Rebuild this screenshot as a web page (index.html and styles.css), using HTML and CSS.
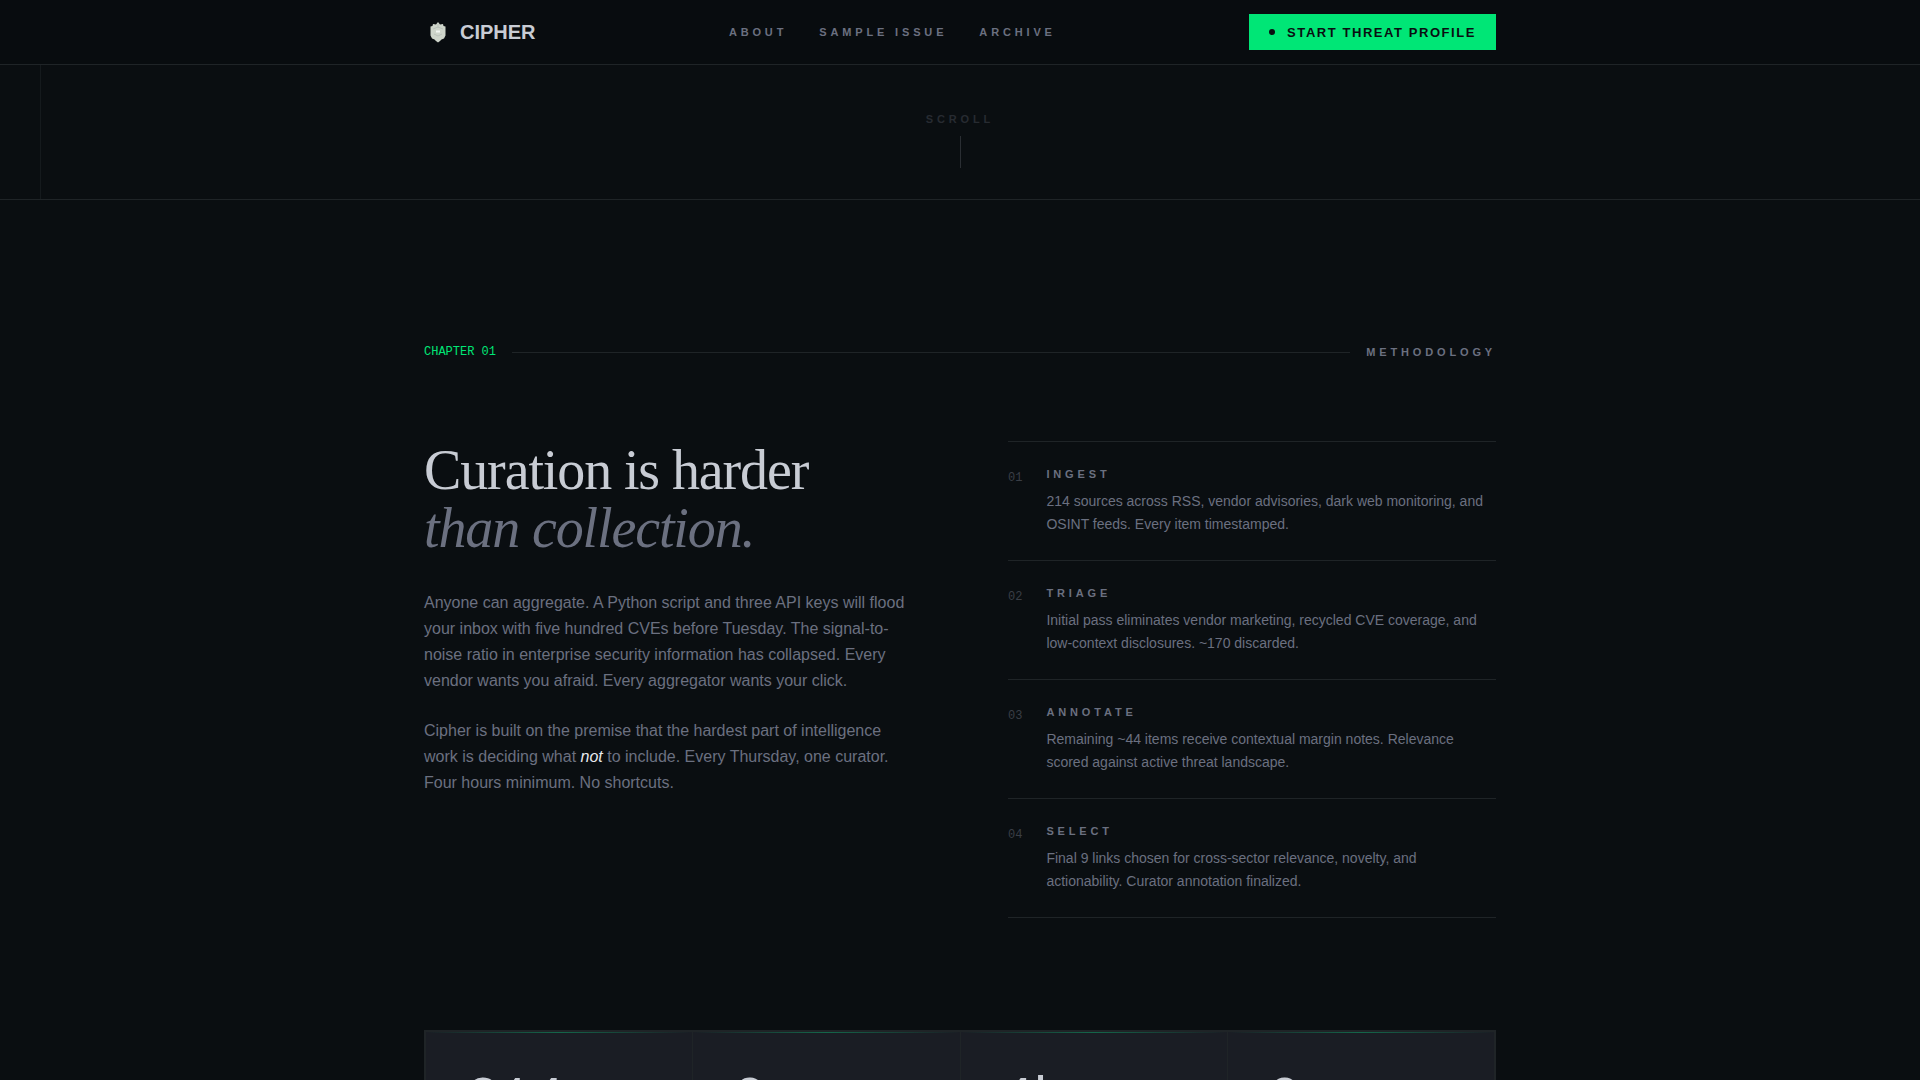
FILE: index.html
```
<!DOCTYPE html>
<html lang="en">
<head>
    <meta charset="UTF-8">
    <meta name="viewport" content="width=device-width, initial-scale=1.0">
    <title>Cipher</title>
    <link rel="stylesheet" href="styles.css">
</head>
<body>
    <header class="site-header">
        <div class="container header-inner">
            <a class="logo" href="#">
                <svg width="28" height="28" viewBox="0 0 28 28" aria-hidden="true">
                    <path d="M14 4l2 2.500 3-.5.500 2 2 .5v9l-1.500 3-2.500 1-1.500 1.500-2 1.500-2-1.500-1.500-1.500-2.500-1-1.500-3v-9l2-.5.500-2 3 .5z" fill="#ced5ca"/>
                    <path d="M9 11l5-2 5 2M10 16l4 2 4-2M14 6v4" fill="none" stroke="#bac2ba" stroke-width="1"/>
                    <path d="M12 13.500h4" stroke="#f2f6f2" stroke-width="2"/>
                </svg>
                <span>CIPHER</span>
            </a>
            <nav class="site-nav">
                <a href="#about">ABOUT</a>
                <a href="#sample">SAMPLE ISSUE</a>
                <a href="#archive">ARCHIVE</a>
            </nav>
            <button class="cta" type="button"><span class="cta-dot"></span>START THREAT PROFILE</button>
        </div>
    </header>

    <main>
        <section class="hero">
            <div class="scroll-hint">
                <span>SCROLL</span>
                <div class="scroll-line"></div>
            </div>
        </section>

        <section class="container methodology" id="about">
            <div class="chapter">
                <span class="chapter-number">CHAPTER 01</span>
                <div class="chapter-rule"></div>
                <span class="chapter-name">METHODOLOGY</span>
            </div>

            <div class="columns">
                <div class="intro">
                    <h2>Curation is harder<br><em>than collection.</em></h2>
                    <p>Anyone can aggregate. A Python script and three API keys will flood your inbox with five hundred CVEs before Tuesday. The signal-to-noise ratio in enterprise security information has collapsed. Every vendor wants you afraid. Every aggregator wants your click.</p>
                    <p>Cipher is built on the premise that the hardest part of intelligence work is deciding what <em>not</em> to include. Every Thursday, one curator. Four hours minimum. No shortcuts.</p>
                </div>

                <ol class="steps">
                    <li>
                        <span class="step-number">01</span>
                        <div>
                            <h3>INGEST</h3>
                            <p>214 sources across RSS, vendor advisories, dark web monitoring, and OSINT feeds. Every item timestamped.</p>
                        </div>
                    </li>
                    <li>
                        <span class="step-number">02</span>
                        <div>
                            <h3>TRIAGE</h3>
                            <p>Initial pass eliminates vendor marketing, recycled CVE coverage, and low-context disclosures. ~170 discarded.</p>
                        </div>
                    </li>
                    <li>
                        <span class="step-number">03</span>
                        <div>
                            <h3>ANNOTATE</h3>
                            <p>Remaining ~44 items receive contextual margin notes. Relevance scored against active threat landscape.</p>
                        </div>
                    </li>
                    <li>
                        <span class="step-number">04</span>
                        <div>
                            <h3>SELECT</h3>
                            <p>Final 9 links chosen for cross-sector relevance, novelty, and actionability. Curator annotation finalized.</p>
                        </div>
                    </li>
                </ol>
            </div>

            <div class="stats">
                <div class="stat">214</div>
                <div class="stat">9</div>
                <div class="stat">4h</div>
                <div class="stat">0</div>
            </div>
        </section>
    </main>
</body>
</html>
```
FILE: styles.css
```
* {
    box-sizing: border-box;
    margin: 0;
    padding: 0;
}
body {
    background: #0a0e11;
    color: #6b7080;
    font-family: "Liberation Sans", Arial, sans-serif;
    font-size: 16px;
    line-height: 26px;
    height: 100vh;
    overflow: hidden;
}
a {
    color: inherit;
    text-decoration: none;
}
.container {
    max-width: 1200px;
    margin: 0 auto;
    padding: 0 64px;
}

/* header */
.site-header {
    background: #080c0f;
    border-bottom: 1px solid #1f2427;
}
.header-inner {
    display: flex;
    align-items: center;
    justify-content: space-between;
    height: 64px;
}
.logo {
    display: flex;
    align-items: center;
    gap: 8px;
    color: #c8ccd4;
    font-size: 20px;
    font-weight: bold;
}
.site-nav {
    display: flex;
    gap: 32px;
    font-size: 11px;
    font-weight: bold;
    letter-spacing: 0.35em;
}
.cta {
    display: flex;
    align-items: center;
    gap: 12px;
    height: 36px;
    padding: 0 20px;
    border: none;
    background: #00e676;
    color: #0a0e11;
    font-family: inherit;
    font-size: 13px;
    font-weight: bold;
    letter-spacing: 0.12em;
    cursor: pointer;
}
.cta-dot {
    width: 6px;
    height: 6px;
    border-radius: 50%;
    background: #0a0e11;
}

/* hero */
.hero {
    position: relative;
    padding: 46px 0 31px;
    border-bottom: 1px solid #1f2427;
}
.hero::before {
    content: "";
    position: absolute;
    top: 0;
    bottom: 0;
    left: 40px;
    width: 1px;
    background: #151a1d;
}
.scroll-hint {
    display: flex;
    flex-direction: column;
    align-items: center;
    gap: 9px;
    color: #272b31;
    font-size: 11px;
    font-weight: bold;
    letter-spacing: 0.35em;
    line-height: 16px;
}
.scroll-line {
    width: 1px;
    height: 32px;
    background: #2a2e33;
}

/* methodology */
.methodology {
    padding-top: 144px;
}
.chapter {
    display: flex;
    align-items: center;
    gap: 16px;
    margin-bottom: 81px;
    line-height: 16px;
}
.chapter-number {
    color: #00e676;
    font-family: "Liberation Mono", monospace;
    font-size: 12px;
}
.chapter-rule {
    flex: 1;
    height: 1px;
    background: #1f2427;
}
.chapter-name {
    font-size: 11px;
    font-weight: bold;
    letter-spacing: 0.35em;
}
.columns {
    display: grid;
    grid-template-columns: 1fr 1fr;
    gap: 96px;
}
.intro h2 {
    margin-bottom: 33px;
    color: #c8ccd4;
    font-family: "Liberation Serif", serif;
    font-size: 56px;
    font-weight: normal;
    letter-spacing: -0.02em;
    line-height: 58px;
}
.intro h2 em {
    color: #6b7080;
}
.intro p {
    margin-bottom: 24px;
}
.intro p em {
    color: #e8eaee;
}
.steps {
    border-top: 1px solid #1f2427;
    list-style: none;
}
.steps li {
    display: flex;
    gap: 24px;
    padding: 24px 0;
    border-bottom: 1px solid #1f2427;
}
.step-number {
    padding-top: 3px;
    color: #3a3e46;
    font-family: "Liberation Mono", monospace;
    font-size: 12px;
    line-height: 18px;
}
.steps h3 {
    margin-bottom: 8px;
    font-size: 11px;
    letter-spacing: 0.35em;
    line-height: 16px;
}
.steps p {
    font-size: 14px;
    line-height: 23px;
}

/* stats */
.stats {
    display: grid;
    grid-template-columns: repeat(4, 1fr);
    gap: 1px;
    margin-top: 112px;
    padding: 1px;
    border: 1px solid #1f2427;
    background: #1f2427;
}
.stat {
    position: relative;
    padding: 40px;
    background: #1a1d24;
    color: #c8ccd4;
    font-family: "Liberation Mono", monospace;
    font-size: 56px;
    letter-spacing: -0.02em;
    line-height: 56px;
}
.stat::before {
    content: "";
    position: absolute;
    top: 0;
    left: 0;
    right: 0;
    height: 1px;
    background: linear-gradient(90deg, transparent, #14664a, transparent);
}
```
